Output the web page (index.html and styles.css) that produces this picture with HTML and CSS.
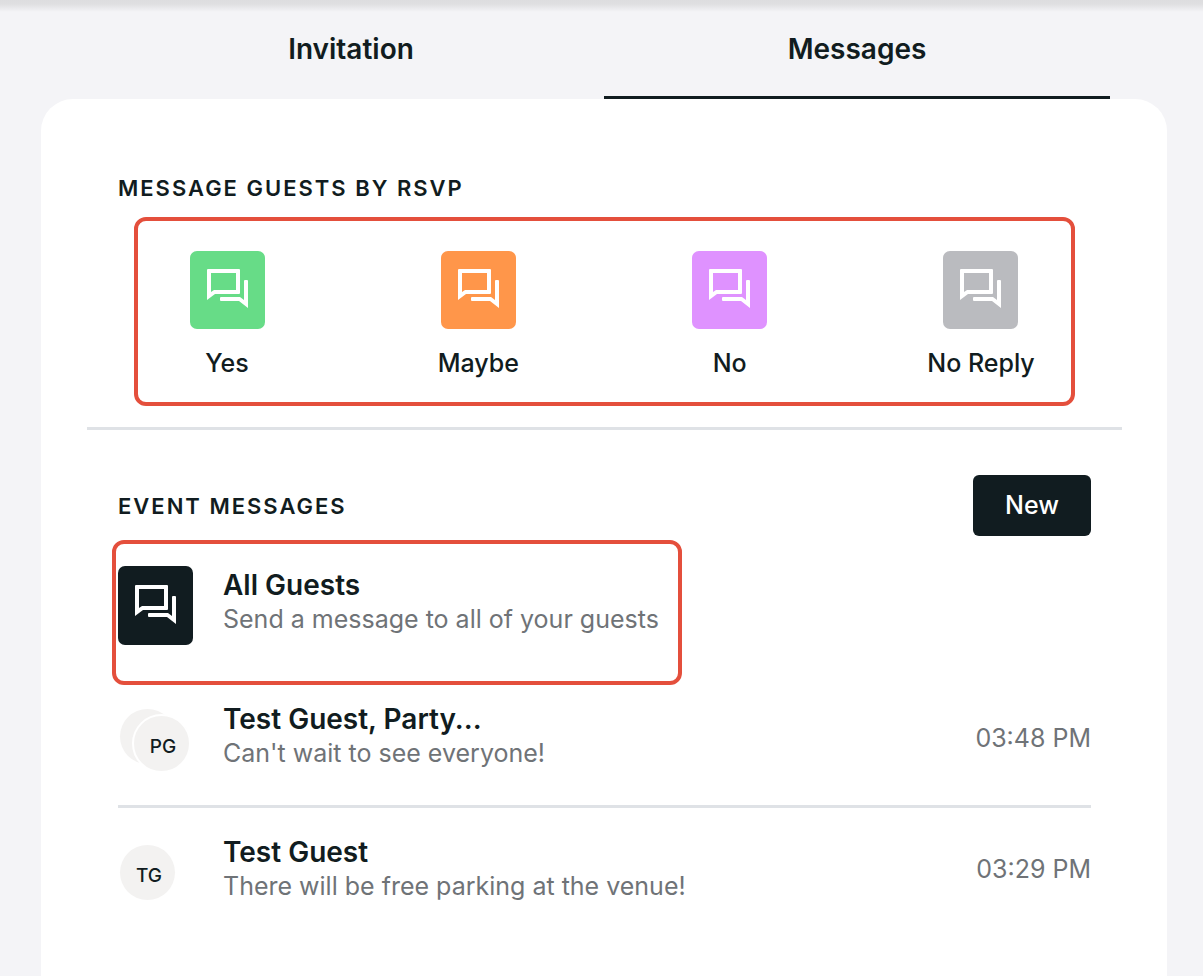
FILE: index.html
```html
<!DOCTYPE html>
<html lang="en">
<head>
  <meta charset="UTF-8">
  <meta name="viewport" content="width=device-width, initial-scale=1.0">
  <title>Messages</title>
  <link rel="stylesheet" href="styles.css">
</head>
<body>
  <svg class="symbols" aria-hidden="true">
    <symbol id="chat" viewBox="0 0 41 39">
      <path fill-rule="evenodd" d="M1 0H32Q33 0 33 1V24Q33 25 32 25H8L0 31V1Q0 0 1 0ZM4 4V23L7 21H29V4Z"></path>
      <path d="M37 12Q37 11 38 11H40Q41 11 41 12V39L32 32H14Q13 32 13 31V29Q13 28 14 28H33L37 31Z"></path>
    </symbol>
  </svg>

  <nav class="tabs">
    <a class="tab" href="#invitation">Invitation</a>
    <a class="tab active" href="#messages">Messages</a>
  </nav>

  <main class="card" id="messages">
    <section class="rsvp">
      <h2>Message guests by RSVP</h2>
      <div class="highlight rsvp-list">
        <button class="rsvp-item">
          <span class="tile yes"><svg class="icon"><use href="#chat"></use></svg></span>
          Yes
        </button>
        <button class="rsvp-item">
          <span class="tile maybe"><svg class="icon"><use href="#chat"></use></svg></span>
          Maybe
        </button>
        <button class="rsvp-item">
          <span class="tile no"><svg class="icon"><use href="#chat"></use></svg></span>
          No
        </button>
        <button class="rsvp-item">
          <span class="tile no-reply"><svg class="icon"><use href="#chat"></use></svg></span>
          No Reply
        </button>
      </div>
    </section>

    <section class="events">
      <header class="events-header">
        <h2>Event messages</h2>
        <button class="new">New</button>
      </header>

      <div class="highlight all-guests">
        <span class="tile dark"><svg class="icon"><use href="#chat"></use></svg></span>
        <div class="text">
          <h3>All Guests</h3>
          <p>Send a message to all of your guests</p>
        </div>
      </div>

      <div class="message">
        <div class="avatars">
          <span class="avatar"></span>
          <span class="avatar front">PG</span>
        </div>
        <div class="text">
          <h3>Test Guest, Party...</h3>
          <p>Can't wait to see everyone!</p>
        </div>
        <time>03:48 PM</time>
      </div>

      <div class="message">
        <div class="avatars">
          <span class="avatar">TG</span>
        </div>
        <div class="text">
          <h3>Test Guest</h3>
          <p>There will be free parking at the venue!</p>
        </div>
        <time>03:29 PM</time>
      </div>
    </section>
  </main>
</body>
</html>
```

FILE: styles.css
```css
* {
  box-sizing: border-box;
}

body {
  font-family: Inter, 'Liberation Sans', sans-serif;
  margin: 0;
  padding: 0 36px 0 41px;
  min-height: 100vh;
  display: flex;
  flex-direction: column;
  background: #f4f4f7 linear-gradient(#dddddf, #dfdfe1 4px, #f4f4f7 12px) no-repeat 0 0 / 100% 12px;
  color: #111c20;
}

h2, h3, p {
  margin: 0;
}

h2 {
  font-size: 22px;
  line-height: 28px;
  font-weight: 600;
  letter-spacing: 2px;
  text-transform: uppercase;
}

h3 {
  font-size: 28px;
  line-height: 34px;
  font-weight: 600;
}

p, time {
  font-size: 25px;
  line-height: 34px;
  color: #6f7377;
}

button {
  font: inherit;
  color: inherit;
  border: none;
  cursor: pointer;
}

.symbols {
  display: none;
}

.tabs {
  display: flex;
  height: 99px;
  padding: 0 57px;
}

.tab {
  flex: 1;
  border-bottom: 3px solid transparent;
  font-size: 28px;
  line-height: 98px;
  font-weight: 600;
  text-align: center;
  text-decoration: none;
  color: inherit;
}

.tab.active {
  border-bottom-color: #111c20;
}

.card {
  flex: 1;
  padding: 75px 45px 70px 46px;
  border-radius: 32px 32px 0 0;
  background-color: #fff;
}

.rsvp {
  padding: 0 31px 21px;
  border-bottom: 3px solid #dfe2e6;
}

.highlight {
  border: 4px solid #e44f3c;
  border-radius: 12px;
}

.rsvp-list {
  display: flex;
  justify-content: space-between;
  margin: 15px 16px 0;
  padding: 30px 34px 22px 33px;
}

.rsvp-item {
  display: flex;
  flex-direction: column;
  align-items: center;
  gap: 17px;
  width: 112px;
  padding: 0;
  background: none;
  font-size: 25px;
  line-height: 34px;
  font-weight: 500;
  white-space: nowrap;
}

.tile {
  display: block;
  width: 75px;
  height: 78px;
  padding: 18px 17px;
  border-radius: 7px;
}

.icon {
  display: block;
  width: 41px;
  height: 39px;
  fill: #fff;
}

.yes {
  background-color: #67dc87;
}

.maybe {
  background-color: #ff964a;
}

.no {
  background-color: #df92ff;
}

.no-reply {
  background-color: #babbbf;
}

.dark {
  height: 79px;
  padding-top: 19px;
  background-color: #111c20;
}

.events {
  padding: 45px 31px 0;
}

.events-header {
  display: flex;
  justify-content: space-between;
  align-items: center;
}

.new {
  width: 118px;
  height: 61px;
  padding-bottom: 3px;
  border-radius: 6px;
  background-color: #111c20;
  color: #fff;
  font-size: 25px;
  font-weight: 500;
}

.all-guests {
  display: flex;
  gap: 30px;
  width: fit-content;
  margin: 4px 0 0 -6px;
  padding: 22px 19px 36px 2px;
}

.all-guests .text {
  padding-top: 2px;
}

.message {
  display: flex;
  padding: 17px 0 32px;
}

.message + .message {
  border-top: 3px solid #dfe2e6;
  padding-top: 27px;
}

.message .text {
  flex: 1;
}

.message time {
  align-self: center;
}

.avatars {
  display: flex;
  align-self: center;
  width: 105px;
  padding: 7px 2px 0;
}

.avatar {
  width: 55px;
  height: 55px;
  padding-left: 3px;
  border-radius: 50%;
  background-color: #f3f2f1;
  font-size: 19px;
  line-height: 62px;
  font-weight: 500;
  text-align: center;
}

/* second guest overlaps the first */
.front {
  margin: 5px 0 0 -43px;
  width: 59px;
  height: 59px;
  border: 2px solid #fff;
}
```
